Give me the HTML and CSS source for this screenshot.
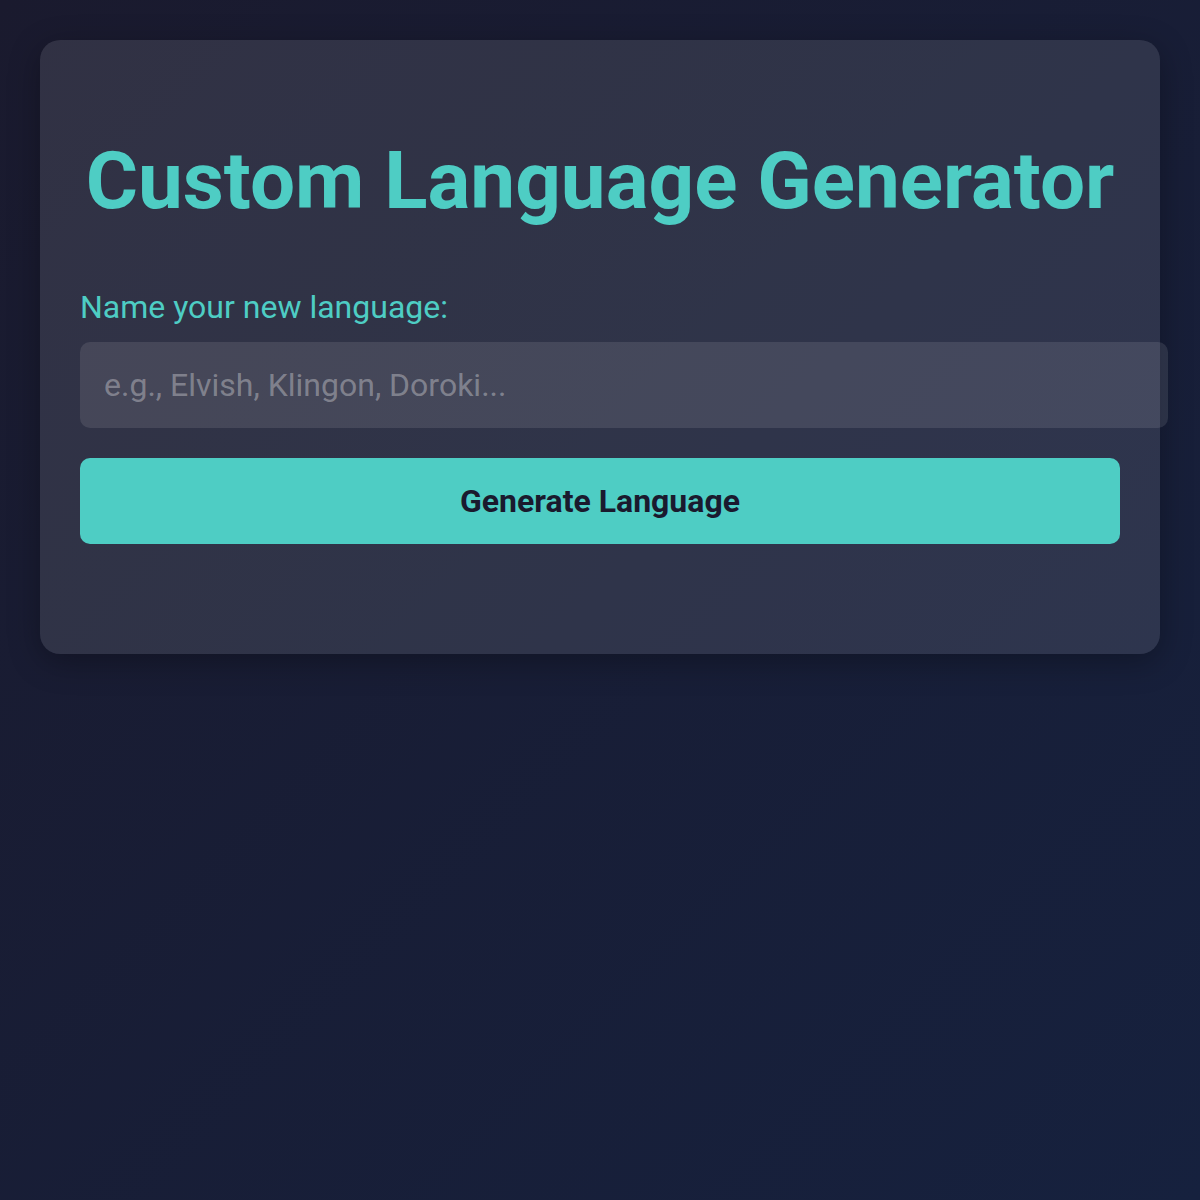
FILE: index.html
```html
<!DOCTYPE html>
<html lang="en">
<head>
<meta charset="utf-8">
<title>Custom Language Generator</title>
<link rel="stylesheet" href="styles.css">
</head>
<body>
<div class="card">
  <h1 class="title">Custom Language Generator</h1>
  <label class="field-label" for="lang">Name your new language:</label>
  <input class="field-input" id="lang" type="text" placeholder="e.g., Elvish, Klingon, Doroki...">
  <button class="gen-btn" type="button">Generate Language</button>
  <div class="output"></div>
</div>
</body>
</html>
```
FILE: styles.css
```css
html, body {
  margin: 0;
  padding: 0;
  min-height: 100%;
}
body {
  font-family: Roboto, "Liberation Sans", sans-serif;
  background: linear-gradient(135deg, #1a1a2e 0%, #16213e 100%);
  min-height: 1200px;
  padding: 40px;
  box-sizing: border-box;
  color: #4ecdc4;
}
.card {
  background: rgba(255, 255, 255, 0.1);
  border-radius: 20px;
  padding: 40px;
  box-shadow: 0 8px 32px rgba(0, 0, 0, 0.3);
}
.title {
  font-size: 80px;
  font-weight: 700;
  text-align: center;
  margin: 54px 0 60px;
  color: #4ecdc4;
}
.field-label {
  display: block;
  font-size: 32px;
  margin-bottom: 16px;
  color: #4ecdc4;
}
.field-input {
  display: block;
  width: 100%;
  padding: 24px;
  font-family: Roboto, "Liberation Sans", sans-serif;
  font-size: 32px;
  border: none;
  border-radius: 10px;
  background: rgba(255, 255, 255, 0.1);
  color: #ffffff;
  outline: none;
}
.field-input::placeholder {
  color: rgba(255, 255, 255, 0.32);
}
.gen-btn {
  display: block;
  width: 100%;
  margin-top: 30px;
  padding: 24px;
  font-family: Roboto, "Liberation Sans", sans-serif;
  font-size: 32px;
  font-weight: 700;
  border: none;
  border-radius: 10px;
  background: #4ecdc4;
  color: #1a1a2e;
  cursor: pointer;
}
.output {
  margin-top: 30px;
  min-height: 40px;
}
```
